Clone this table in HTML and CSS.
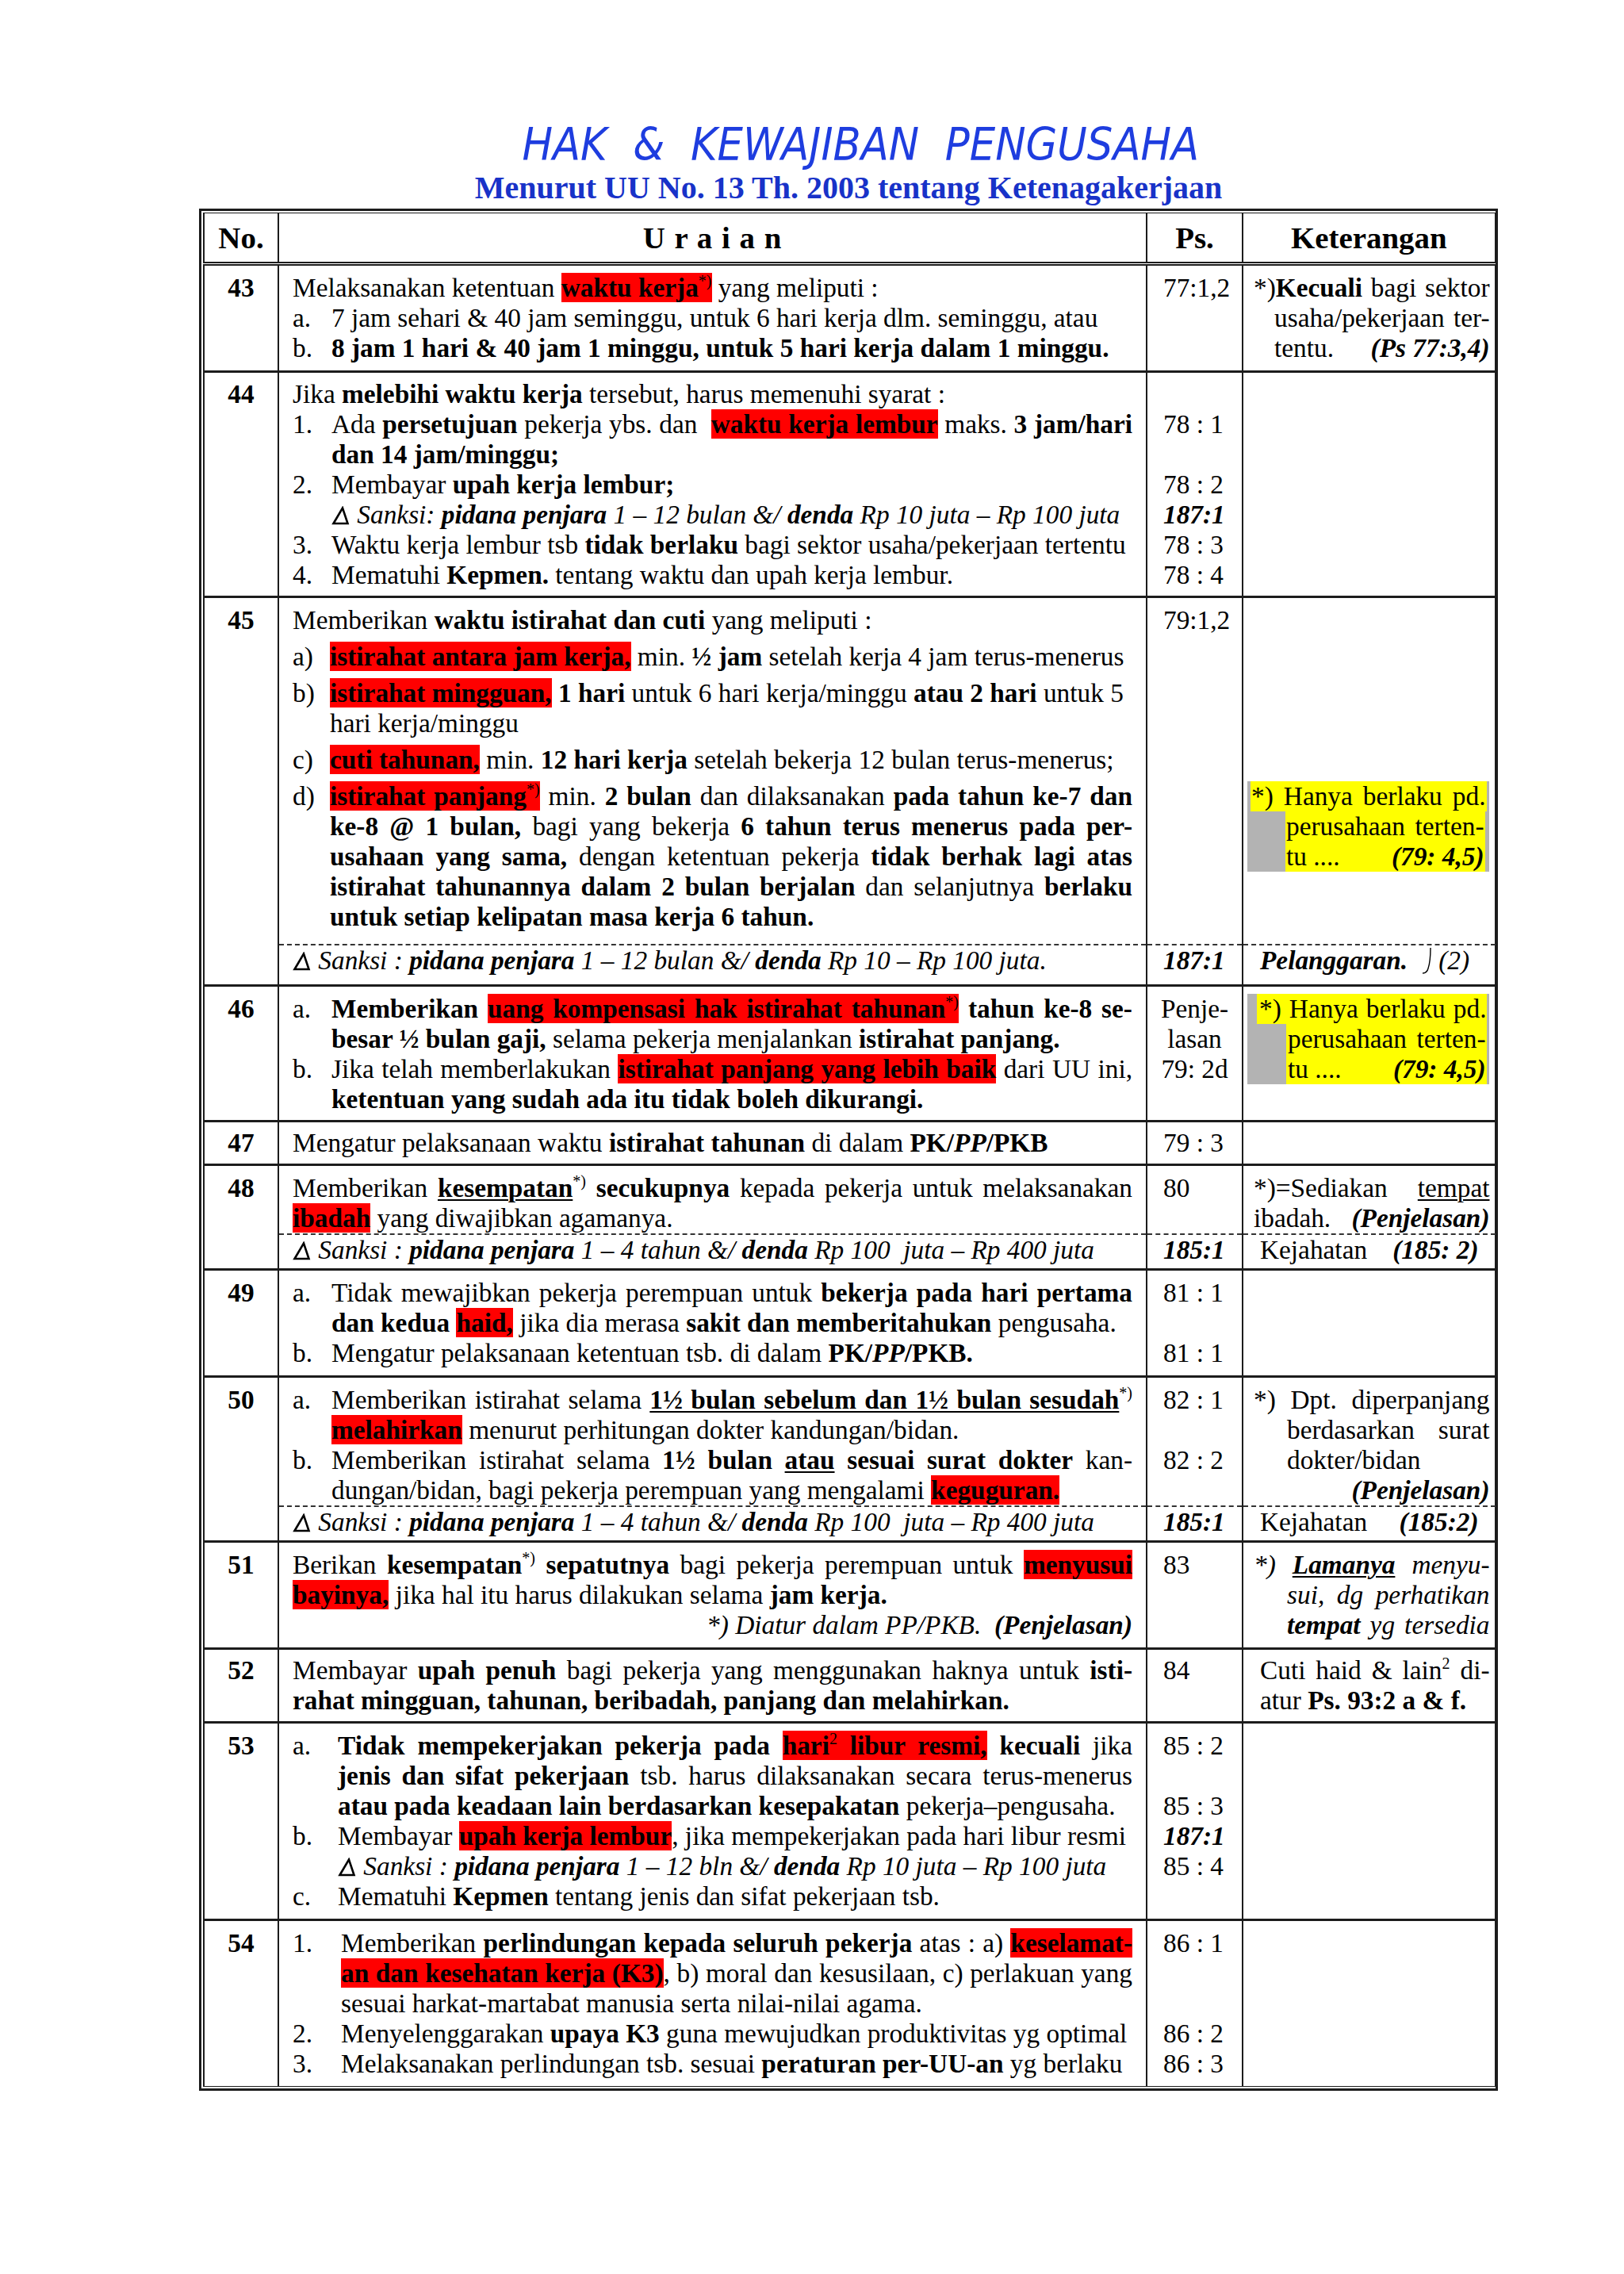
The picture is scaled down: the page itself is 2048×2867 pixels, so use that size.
FILE: index.html
```html
<!DOCTYPE html>
<html lang="id">
<head>
<meta charset="utf-8">
<title>Hak &amp; Kewajiban Pengusaha</title>
<link rel="stylesheet" href="styles.css">
</head>
<body>
<div class="page">
  <div class="title"><span class="tt">HAK  &amp;  KEWAJIBAN  PENGUSAHA</span></div>
  <div class="subtitle">Menurut UU No. 13 Th. 2003 tentang Ketenagakerjaan</div>
  <div class="frame">
  <table>
    <colgroup><col class="c1"><col class="c2"><col class="c3"><col class="c4"></colgroup>
    <thead>
      <tr><th>No.</th><th class="hu">U r a i a n</th><th>Ps.</th><th>Keterangan</th></tr>
    </thead>
    <tbody>
      <!-- 43 -->
      <tr>
        <td class="no">43</td>
        <td class="ur">
          <div class="ln">Melaksanakan ketentuan <span class="hl">waktu kerja<span class="sup">*)</span></span> yang meliputi :</div>
          <div class="it"><span class="mk">a.</span><div class="tx"><div class="ln">7 jam sehari &amp; 40 jam seminggu, untuk 6 hari kerja dlm. seminggu, atau</div></div></div>
          <div class="it"><span class="mk">b.</span><div class="tx"><div class="ln"><b>8 jam 1 hari &amp; 40 jam 1 minggu, untuk 5 hari kerja dalam 1 minggu.</b></div></div></div>
        </td>
        <td class="ps"><div class="ln">77:1,2</div></td>
        <td class="ket">
          <div class="ln j">*)<b>Kecuali</b> bagi sektor</div>
          <div class="ln j ind">usaha/pekerjaan ter-</div>
          <div class="ln sb ind"><span>tentu.</span><b><i>(Ps 77:3,4)</i></b></div>
        </td>
      </tr>
      <!-- 44 -->
      <tr class="r44">
        <td class="no">44</td>
        <td class="ur">
          <div class="ln">Jika <b>melebihi waktu kerja</b> tersebut, harus memenuhi syarat :</div>
          <div class="it"><span class="mk">1.</span><div class="tx">
            <div class="ln j">Ada <b>persetujuan</b> pekerja ybs. dan&nbsp; <span class="hl">waktu kerja lembur</span> maks. <b>3 jam/hari</b></div>
            <div class="ln"><b>dan 14 jam/minggu;</b></div>
          </div></div>
          <div class="it"><span class="mk">2.</span><div class="tx">
            <div class="ln">Membayar <b>upah kerja lembur;</b></div>
            <div class="ln"><svg class="tri" width="24" height="24" viewBox="0 0 24 24"><path d="M2.5 22 L14 2.5 L20.5 22 Z" fill="none" stroke="#000" stroke-width="2.6" stroke-linejoin="miter"/></svg> <i>Sanksi: <b>pidana penjara</b> 1 – 12 bulan &amp;/ <b>denda</b> Rp 10 juta – Rp 100 juta</i></div>
          </div></div>
          <div class="it"><span class="mk">3.</span><div class="tx"><div class="ln">Waktu kerja lembur tsb <b>tidak berlaku</b> bagi sektor usaha/pekerjaan tertentu</div></div></div>
          <div class="it"><span class="mk">4.</span><div class="tx"><div class="ln">Mematuhi <b>Kepmen.</b> tentang waktu dan upah kerja lembur.</div></div></div>
        </td>
        <td class="ps">
          <div class="ln">&nbsp;</div>
          <div class="ln">78 : 1</div>
          <div class="ln">&nbsp;</div>
          <div class="ln">78 : 2</div>
          <div class="ln bi">187:1</div>
          <div class="ln">78 : 3</div>
          <div class="ln">78 : 4</div>
        </td>
        <td class="ket"></td>
      </tr>
      <!-- 45 -->
      <tr class="mr r45">
        <td class="no" rowspan="2">45</td>
        <td class="ur">
          <div class="ln">Memberikan <b>waktu istirahat dan cuti</b> yang meliputi :</div>
          <div class="it sp it45"><span class="mk">a)</span><div class="tx"><div class="ln"><span class="hl">istirahat antara jam kerja,</span> min. <b>½ jam</b> setelah kerja 4 jam terus-menerus</div></div></div>
          <div class="it sp it45"><span class="mk">b)</span><div class="tx">
            <div class="ln"><span class="hl">istirahat mingguan,</span> <b>1 hari</b> untuk 6 hari kerja/minggu <b>atau 2 hari</b> untuk 5</div>
            <div class="ln">hari kerja/minggu</div>
          </div></div>
          <div class="it sp it45"><span class="mk">c)</span><div class="tx"><div class="ln"><span class="hl">cuti tahunan,</span> min. <b>12 hari kerja</b> setelah bekerja 12 bulan terus-menerus;</div></div></div>
          <div class="it sp it45"><span class="mk">d)</span><div class="tx">
            <div class="ln j"><span class="hl">istirahat panjang<span class="sup">*)</span></span> min. <b>2 bulan</b> dan dilaksanakan <b>pada tahun ke-7 dan</b></div>
            <div class="ln j"><b>ke-8 @ 1 bulan,</b> bagi yang bekerja <b>6 tahun terus menerus pada per-</b></div>
            <div class="ln j"><b>usahaan yang sama,</b> dengan ketentuan pekerja <b>tidak berhak lagi atas</b></div>
            <div class="ln j"><b>istirahat tahunannya dalam 2 bulan berjalan</b> dan selanjutnya <b>berlaku</b></div>
            <div class="ln"><b>untuk setiap kelipatan masa kerja 6 tahun.</b></div>
          </div></div>
        </td>
        <td class="ps"><div class="ln">79:1,2</div></td>
        <td class="ket">
          <div class="note note45">
            <div class="nl n1 j">*) Hanya berlaku pd.</div>
            <div class="nl n2 j">perusahaan terten-</div>
            <div class="nl n2 sb"><span>tu ....</span><b><i>(79: 4,5)</i></b></div>
          </div>
        </td>
      </tr>
      <tr class="sk r45s">
        <td class="ur"><div class="ln"><svg class="tri" width="24" height="24" viewBox="0 0 24 24"><path d="M2.5 22 L14 2.5 L20.5 22 Z" fill="none" stroke="#000" stroke-width="2.6" stroke-linejoin="miter"/></svg> <i>Sanksi : <b>pidana penjara</b> 1 – 12 bulan &amp;/ <b>denda</b> Rp 10 – Rp 100 juta.</i></div></td>
        <td class="ps"><div class="ln bi">187:1</div></td>
        <td class="ket"><div class="ln kp"><b><i>Pelanggaran.</i></b>&nbsp; <svg class="hook" width="14" height="34" viewBox="0 0 14 34"><path d="M12 1 C12 10 11 21 9 27 C8 31 5 33 2 33" fill="none" stroke="#000" stroke-width="1.4"/></svg> <i>(2)</i></div></td>
      </tr>
      <!-- 46 -->
      <tr class="r46">
        <td class="no">46</td>
        <td class="ur">
          <div class="it"><span class="mk">a.</span><div class="tx">
            <div class="ln j"><b>Memberikan</b> <span class="hl">uang kompensasi hak istirahat tahunan<span class="sup">*)</span></span> <b>tahun ke-8 se-</b></div>
            <div class="ln"><b>besar ½ bulan gaji,</b> selama pekerja menjalankan <b>istirahat panjang.</b></div>
          </div></div>
          <div class="it"><span class="mk">b.</span><div class="tx">
            <div class="ln j">Jika telah memberlakukan <span class="hl">istirahat panjang yang lebih baik</span> dari UU ini,</div>
            <div class="ln"><b>ketentuan yang sudah ada itu tidak boleh dikurangi.</b></div>
          </div></div>
        </td>
        <td class="ps pc">
          <div class="ln">Penje-</div>
          <div class="ln">lasan</div>
          <div class="ln">79: 2d</div>
        </td>
        <td class="ket">
          <div class="note note46">
            <div class="nl n1 j">*) Hanya berlaku pd.</div>
            <div class="nl n2 j">perusahaan terten-</div>
            <div class="nl n2 sb"><span>tu ....</span><b><i>(79: 4,5)</i></b></div>
          </div>
        </td>
      </tr>
      <!-- 47 -->
      <tr class="tight">
        <td class="no">47</td>
        <td class="ur"><div class="ln">Mengatur pelaksanaan waktu <b>istirahat tahunan</b> di dalam <b>PK/<i>PP</i>/PKB</b></div></td>
        <td class="ps"><div class="ln">79 : 3</div></td>
        <td class="ket"></td>
      </tr>
      <!-- 48 -->
      <tr class="mr">
        <td class="no" rowspan="2">48</td>
        <td class="ur">
          <div class="ln j">Memberikan <b class="ul">kesempatan</b><span class="sup">*)</span> <b>secukupnya</b> kepada pekerja untuk melaksanakan</div>
          <div class="ln"><span class="hl">ibadah</span> yang diwajibkan agamanya.</div>
        </td>
        <td class="ps"><div class="ln">80</div></td>
        <td class="ket">
          <div class="ln j">*)=Sediakan <span class="ul">tempat</span></div>
          <div class="ln j">ibadah. <b><i>(Penjelasan)</i></b></div>
        </td>
      </tr>
      <tr class="sk">
        <td class="ur"><div class="ln"><svg class="tri" width="24" height="24" viewBox="0 0 24 24"><path d="M2.5 22 L14 2.5 L20.5 22 Z" fill="none" stroke="#000" stroke-width="2.6" stroke-linejoin="miter"/></svg> <i>Sanksi : <b>pidana penjara</b> 1 – 4 tahun &amp;/ <b>denda</b> Rp 100&nbsp; juta – Rp 400 juta</i></div></td>
        <td class="ps"><div class="ln bi">185:1</div></td>
        <td class="ket"><div class="ln sb kj"><span>Kejahatan</span><b><i>(185: 2)</i></b></div></td>
      </tr>
      <!-- 49 -->
      <tr>
        <td class="no">49</td>
        <td class="ur">
          <div class="it"><span class="mk">a.</span><div class="tx">
            <div class="ln j">Tidak mewajibkan pekerja perempuan untuk <b>bekerja pada hari pertama</b></div>
            <div class="ln"><b>dan kedua</b> <span class="hl">haid,</span> jika dia merasa <b>sakit dan memberitahukan</b> pengusaha.</div>
          </div></div>
          <div class="it"><span class="mk">b.</span><div class="tx"><div class="ln">Mengatur pelaksanaan ketentuan tsb. di dalam <b>PK/<i>PP</i>/PKB.</b></div></div></div>
        </td>
        <td class="ps">
          <div class="ln">81 : 1</div>
          <div class="ln">&nbsp;</div>
          <div class="ln">81 : 1</div>
        </td>
        <td class="ket"></td>
      </tr>
      <!-- 50 -->
      <tr class="mr">
        <td class="no" rowspan="2">50</td>
        <td class="ur">
          <div class="it"><span class="mk">a.</span><div class="tx">
            <div class="ln j">Memberikan istirahat selama <b class="ul">1½ bulan sebelum dan 1½ bulan sesudah</b><span class="sup">*)</span></div>
            <div class="ln"><span class="hl">melahirkan</span> menurut perhitungan dokter kandungan/bidan.</div>
          </div></div>
          <div class="it"><span class="mk">b.</span><div class="tx">
            <div class="ln j">Memberikan istirahat selama <b>1½ bulan <span class="ul">atau</span> sesuai surat dokter</b> kan-</div>
            <div class="ln">dungan/bidan, bagi pekerja perempuan yang mengalami <span class="hl">keguguran.</span></div>
          </div></div>
        </td>
        <td class="ps">
          <div class="ln">82 : 1</div>
          <div class="ln">&nbsp;</div>
          <div class="ln">82 : 2</div>
        </td>
        <td class="ket">
          <div class="ln j">*) Dpt. diperpanjang</div>
          <div class="ln j ind2">berdasarkan surat</div>
          <div class="ln ind2">dokter/bidan</div>
          <div class="ln r"><b><i>(Penjelasan)</i></b></div>
        </td>
      </tr>
      <tr class="sk">
        <td class="ur"><div class="ln"><svg class="tri" width="24" height="24" viewBox="0 0 24 24"><path d="M2.5 22 L14 2.5 L20.5 22 Z" fill="none" stroke="#000" stroke-width="2.6" stroke-linejoin="miter"/></svg> <i>Sanksi : <b>pidana penjara</b> 1 – 4 tahun &amp;/ <b>denda</b> Rp 100&nbsp; juta – Rp 400 juta</i></div></td>
        <td class="ps"><div class="ln bi">185:1</div></td>
        <td class="ket"><div class="ln sb kj"><span>Kejahatan</span><b><i>(185:2)</i></b></div></td>
      </tr>
      <!-- 51 -->
      <tr>
        <td class="no">51</td>
        <td class="ur">
          <div class="ln j">Berikan <b>kesempatan</b><span class="sup">*)</span> <b>sepatutnya</b> bagi pekerja perempuan untuk <span class="hl">menyusui</span></div>
          <div class="ln"><span class="hl">bayinya,</span> jika hal itu harus dilakukan selama <b>jam kerja.</b></div>
          <div class="ln r"><i>*) Diatur dalam PP/PKB.&nbsp; <b>(Penjelasan)</b></i></div>
        </td>
        <td class="ps"><div class="ln">83</div></td>
        <td class="ket">
          <div class="ln j"><i>*) <b class="ul">Lamanya</b> menyu-</i></div>
          <div class="ln j ind2"><i>sui, dg perhatikan</i></div>
          <div class="ln j ind2"><i><b>tempat</b> yg tersedia</i></div>
        </td>
      </tr>
      <!-- 52 -->
      <tr class="tight">
        <td class="no">52</td>
        <td class="ur">
          <div class="ln j">Membayar <b>upah penuh</b> bagi pekerja yang menggunakan haknya untuk <b>isti-</b></div>
          <div class="ln"><b>rahat mingguan, tahunan, beribadah, panjang dan melahirkan.</b></div>
        </td>
        <td class="ps"><div class="ln">84</div></td>
        <td class="ket">
          <div class="ln j kc">Cuti haid &amp; lain<span class="sup">2</span> di-</div>
          <div class="ln kc">atur <b>Ps. 93:2 a &amp; f.</b></div>
        </td>
      </tr>
      <!-- 53 -->
      <tr>
        <td class="no">53</td>
        <td class="ur">
          <div class="it it53"><span class="mk">a.</span><div class="tx">
            <div class="ln j"><b>Tidak mempekerjakan pekerja pada</b> <span class="hl">hari<span class="sup">2</span> libur resmi,</span> <b>kecuali</b> jika</div>
            <div class="ln j"><b>jenis dan sifat pekerjaan</b> tsb. harus dilaksanakan secara terus-menerus</div>
            <div class="ln"><b>atau pada keadaan lain berdasarkan kesepakatan</b> pekerja–pengusaha.</div>
          </div></div>
          <div class="it it53"><span class="mk">b.</span><div class="tx">
            <div class="ln">Membayar <span class="hl">upah kerja lembur</span>, jika mempekerjakan pada hari libur resmi</div>
            <div class="ln"><svg class="tri" width="24" height="24" viewBox="0 0 24 24"><path d="M2.5 22 L14 2.5 L20.5 22 Z" fill="none" stroke="#000" stroke-width="2.6" stroke-linejoin="miter"/></svg> <i>Sanksi : <b>pidana penjara</b> 1 – 12 bln &amp;/ <b>denda</b> Rp 10 juta – Rp 100 juta</i></div>
          </div></div>
          <div class="it it53"><span class="mk">c.</span><div class="tx"><div class="ln">Mematuhi <b>Kepmen</b> tentang jenis dan sifat pekerjaan tsb.</div></div></div>
        </td>
        <td class="ps">
          <div class="ln">85 : 2</div>
          <div class="ln">&nbsp;</div>
          <div class="ln">85 : 3</div>
          <div class="ln bi">187:1</div>
          <div class="ln">85 : 4</div>
        </td>
        <td class="ket"></td>
      </tr>
      <!-- 54 -->
      <tr>
        <td class="no">54</td>
        <td class="ur">
          <div class="it it54"><span class="mk">1.</span><div class="tx">
            <div class="ln j">Memberikan <b>perlindungan kepada seluruh pekerja</b> atas : a) <span class="hl">keselamat-</span></div>
            <div class="ln j"><span class="hl">an dan kesehatan kerja (K3)</span>, b) moral dan kesusilaan, c) perlakuan yang</div>
            <div class="ln">sesuai harkat-martabat manusia serta nilai-nilai agama.</div>
          </div></div>
          <div class="it it54"><span class="mk">2.</span><div class="tx"><div class="ln">Menyelenggarakan <b>upaya K3</b> guna mewujudkan produktivitas yg optimal</div></div></div>
          <div class="it it54"><span class="mk">3.</span><div class="tx"><div class="ln">Melaksanakan perlindungan tsb. sesuai <b>peraturan per-UU-an</b> yg berlaku</div></div></div>
        </td>
        <td class="ps">
          <div class="ln">86 : 1</div>
          <div class="ln">&nbsp;</div>
          <div class="ln">&nbsp;</div>
          <div class="ln">86 : 2</div>
          <div class="ln">86 : 3</div>
        </td>
        <td class="ket"></td>
      </tr>
    </tbody>
  </table>
  </div>
</div>
</body>
</html>
```

FILE: styles.css
```css
* { box-sizing: border-box; }
html, body { margin: 0; padding: 0; background: #fff; }
body {
  width: 2048px;
  min-height: 2867px;
  font-family: "Liberation Serif", "Times New Roman", serif;
  color: #000;
}
.page { padding: 150px 159px 0 251px; }

.title {
  font-family: "DejaVu Sans", sans-serif;
  font-style: italic;
  font-size: 57px;
  line-height: 64px;
  height: 64px;
  color: #1e3ddf;
  text-align: center;
  white-space: pre;
  padding-left: 30px;
  margin-bottom: 1px;
}
.title .tt {
  display: inline-block;
  transform: scaleX(0.9);
}
.subtitle {
  font-weight: bold;
  font-size: 40px;
  line-height: 44px;
  color: #1832c8;
  text-align: center;
  margin-bottom: 4px;
}

.frame {
  width: 1638px;
  border: 3px solid #1c1c1c;
  padding: 2px;
}
table {
  width: 1628px;
  border-collapse: collapse;
  table-layout: fixed;
  border: 1px solid #1c1c1c;
  font-size: 33.33px;
  line-height: 38px;
}
col.c1 { width: 94px; }
col.c2 { width: 1095px; }
col.c3 { width: 121px; }
col.c4 { width: 318px; }

th {
  font-size: 38.9px;
  font-weight: bold;
  line-height: 45px;
  padding: 8px 0 8px;
  text-align: center;
  border-left: 2px solid #1c1c1c;
  border-bottom: 5px double #1c1c1c;
}
th.hu { letter-spacing: 1px; }

td {
  vertical-align: top;
  padding: 9px 17px 9px 17px;
  border-left: 2px solid #1c1c1c;
  border-top: 3px solid #1c1c1c;
}
td.no { padding: 9px 0 0; text-align: center; font-weight: bold; }
td.ps { padding: 9px 2px 9px 20px; }
td.ps.pc { padding-left: 2px; text-align: center; }
td.ket { padding: 9px 6px 9px 13px; }

tr.r44 > td { padding-top: 8px; padding-bottom: 7px; }
tr.r46 > td { padding-bottom: 7px; }
tr.tight > td { padding-top: 7px; padding-bottom: 7px; }
tr.mr > td { padding-bottom: 0; }
tr.r45 > td { padding-bottom: 15px; }
tr.sk > td { border-top: 2px dashed #333; padding-top: 0; padding-bottom: 4px; }
tr.r45s > td { padding-bottom: 11px; }

.ln { display: block; }
.j { text-align: justify; text-align-last: justify; }
.r { text-align: right; }
.sb { display: flex; justify-content: space-between; }
.ind { padding-left: 26px; }
.ind2 { padding-left: 42px; }
.kj { padding-left: 8px; padding-right: 14px; }
.kp { padding-left: 8px; }
.kc { padding-left: 8px; }
.bi { font-weight: bold; font-style: italic; }

.it { display: flex; }
.it .mk { flex: 0 0 49px; }
.it .tx { flex: 1 1 auto; min-width: 0; }
.it45 .mk { flex-basis: 47px; }
.it53 .mk { flex-basis: 57px; }
.it54 .mk { flex-basis: 61px; }
.sp { margin-top: 8px; }

.hl { background: #ff0000; font-weight: bold; }
.sup {
  font-size: 20px;
  position: relative;
  top: -13px;
  line-height: 0;
  font-weight: normal;
}
.ul {
  text-decoration: underline;
  text-decoration-thickness: 2px;
  text-underline-offset: 3px;
}
.tri { vertical-align: -2px; }
.hook { vertical-align: -6px; }

.note {
  background: #b3b3b3;
  margin-left: -8px;
  margin-right: 1px;
  padding: 0 3px;
}
.note45 { margin-top: 222px; }
.nl { background: #ffff00; }
.note45 .n1 { margin-left: 1px; padding-left: 1px; padding-right: 1px; }
.note45 .n2 { margin-left: 45px; margin-right: 2px; padding-left: 1px; padding-right: 1px; }
.note46 .n1 { margin-left: 9px; padding-left: 3px; padding-right: 0; }
.note46 .n2 { margin-left: 46px; padding-left: 2px; padding-right: 1px; }
```
